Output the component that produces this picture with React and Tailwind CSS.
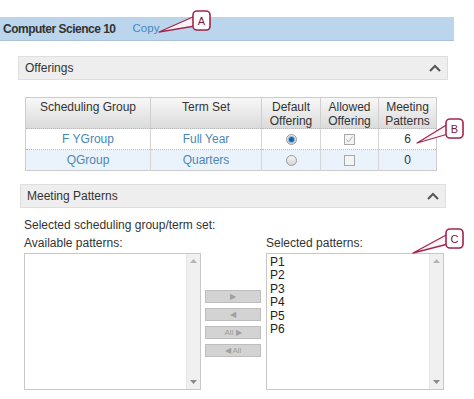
import React from "react";

const font = { fontFamily: '"Liberation Sans", Arial, sans-serif' };

function Chevron() {
  return (
    <svg width="14" height="10" viewBox="0 0 14 10" className="mr-[5px]">
      <path d="M2 8 L7 3 L12 8" fill="none" stroke="#555" strokeWidth="2" />
    </svg>
  );
}

function PanelHeader({ title, className }) {
  return (
    <div className={"flex items-center justify-between h-[24px] bg-[#eeeeee] border border-[#dedede] " + className}>
      <span className="pl-[6px] text-[12px] text-[#333]">{title}</span>
      <Chevron />
    </div>
  );
}

function Radio({ checked }) {
  return (
    <span className="inline-flex items-center justify-center w-[11px] h-[11px] rounded-full border border-[#9a9a9a] bg-gradient-to-b from-[#f4f4f4] to-[#d6d6d6]">
      {checked && <span className="w-[5px] h-[5px] rounded-full bg-[#1c5ea8] shadow-[0_0_1px_1px_#7fb0e0]" />}
    </span>
  );
}

function Checkbox({ checked }) {
  return (
    <span className="inline-flex items-center justify-center w-[11px] h-[11px] border border-[#a8a8a8] bg-[#f4f4f4]">
      {checked && (
        <svg width="9" height="9" viewBox="0 0 9 9">
          <path d="M1.5 4.5 L3.5 7 L7.5 1.5" fill="none" stroke="#b0b0b0" strokeWidth="1" />
        </svg>
      )}
    </span>
  );
}

function Scrollbar() {
  return (
    <div className="w-[14px] h-full bg-[#f0f0f0] border-l border-[#e6e6e6] flex flex-col justify-between items-center py-[5px]">
      <svg width="7" height="4" viewBox="0 0 7 4"><path d="M0 4 L3.5 0 L7 4Z" fill="#b5b5b5" /></svg>
      <svg width="7" height="4" viewBox="0 0 7 4"><path d="M0 0 L3.5 4 L7 0Z" fill="#8a8a8a" /></svg>
    </div>
  );
}

function MoveButton({ children }) {
  return (
    <div className="h-[13px] w-[56px] bg-[#d3d3d3] border border-[#bdbdbd] flex items-center justify-center text-[8px] leading-none text-[#a0a0a0]">
      {children}
    </div>
  );
}

export default function App() {
  const rows = [
    { g: "F YGroup", t: "Full Year", d: true, a: true, m: "6", bg: "bg-white" },
    { g: "QGroup", t: "Quarters", d: false, a: false, m: "0", bg: "bg-[#eaf3fc]" },
  ];
  return (
    <div className="relative w-[474px] h-[399px] bg-white overflow-hidden" style={font}>
      <div className="pt-[17px]">
        <div className="h-[24px] w-[454px] bg-[#bad5ec] border-b border-[#a9c2d8] flex items-center pl-[3px]">
          <span className="text-[12px] font-bold text-[#333] tracking-[-0.5px]">Computer Science 10</span>
          <span className="ml-[17px] text-[11.5px] text-[#4a86b8]">Copy</span>
        </div>
      </div>

      <PanelHeader title="Offerings" className="mt-[15px] ml-[18px] w-[430px]" />

      <table className="mt-[17px] ml-[25px] w-[411px] border-collapse border border-[#cccccc] text-[12px] text-[#333] table-fixed">
        <colgroup>
          <col className="w-[125px]" />
          <col className="w-[111px]" />
          <col className="w-[59px]" />
          <col className="w-[58px]" />
          <col className="w-[58px]" />
        </colgroup>
        <thead>
          <tr className="h-[31px] bg-gradient-to-b from-[#f8f8f8] to-[#dadada]">
            <th className="font-normal align-top pt-[2px] border-r border-[#cfcfcf] leading-[14px]">Scheduling Group</th>
            <th className="font-normal align-top pt-[2px] border-r border-[#cfcfcf] leading-[14px]">Term Set</th>
            <th className="font-normal align-top pt-[2px] border-r border-[#cfcfcf] leading-[14px]">Default<br />Offering</th>
            <th className="font-normal align-top pt-[2px] border-r border-[#cfcfcf] leading-[14px]">Allowed<br />Offering</th>
            <th className="font-normal align-top pt-[2px] leading-[14px]">Meeting<br />Patterns</th>
          </tr>
        </thead>
        <tbody>
          {rows.map((r, i) => (
            <tr key={i} className={"h-[21px] border-t border-dotted border-[#b8b8b8] " + r.bg}>
              <td className="text-center text-[#4a86b8] border-r border-[#d6d6d6]">{r.g}</td>
              <td className="text-center text-[#4a86b8] border-r border-[#d6d6d6]">{r.t}</td>
              <td className="text-center border-r border-[#d6d6d6]"><span className="inline-flex align-middle"><Radio checked={r.d} /></span></td>
              <td className="text-center border-r border-[#d6d6d6]"><span className="inline-flex align-middle"><Checkbox checked={r.a} /></span></td>
              <td className="text-center">{r.m}</td>
            </tr>
          ))}
        </tbody>
      </table>

      <PanelHeader title="Meeting Patterns" className="mt-[13px] ml-[20px] w-[426px]" />

      <div className="ml-[24px] mt-[10px] text-[12px] text-[#333] leading-[14px]">Selected scheduling group/term set:</div>

      <div className="flex ml-[24px] mt-[4px]">
        <div className="flex flex-col w-[177px]">
          <div className="text-[12px] text-[#333] leading-[14px] mb-[3px]">Available patterns:</div>
          <div className="h-[137px] border border-[#c8c8c8] flex justify-end">
            <Scrollbar />
          </div>
        </div>
        <div className="flex flex-col gap-[5px] ml-[4px] mt-[54px]">
          <MoveButton>▶</MoveButton>
          <MoveButton>◀</MoveButton>
          <MoveButton>All ▶</MoveButton>
          <MoveButton>◀ All</MoveButton>
        </div>
        <div className="flex flex-col w-[178px] ml-[5px]">
          <div className="text-[12px] text-[#333] leading-[14px] mb-[3px]">Selected patterns:</div>
          <div className="h-[137px] border border-[#c8c8c8] flex">
            <div className="flex-1 pl-[3px] pt-[2px] text-[12px] text-[#222] leading-[13.4px]">
              <div>P1</div><div>P2</div><div>P3</div><div>P4</div><div>P5</div><div>P6</div>
            </div>
            <Scrollbar />
          </div>
        </div>
      </div>

      <svg className="absolute inset-0 pointer-events-none" width="474" height="399" viewBox="0 0 474 399">
        {[
          { x: 193, y: 11, tip: [159, 32], l: "A" },
          { x: 446, y: 119, tip: [417, 143], l: "B" },
          { x: 446, y: 229, tip: [413, 253], l: "C" },
        ].map((c) => (
          <g key={c.l}>
            <polygon points={`${c.x + 2},${c.y + 5} ${c.tip[0]},${c.tip[1]} ${c.x + 2},${c.y + 15}`} fill="#fbf3f5" stroke="#a3274f" strokeWidth="1.3" strokeLinejoin="round" />
            <rect x={c.x + 1} y={c.y + 1} width="17" height="19" rx="4" fill="#000" opacity="0.12" />
            <rect x={c.x} y={c.y} width="17" height="19" rx="4" fill="#fff" stroke="#a3274f" strokeWidth="1.6" />
            <text x={c.x + 8.5} y={c.y + 13.5} textAnchor="middle" fontSize="11" fill="#7a1838" style={font}>{c.l}</text>
          </g>
        ))}
      </svg>
    </div>
  );
}
